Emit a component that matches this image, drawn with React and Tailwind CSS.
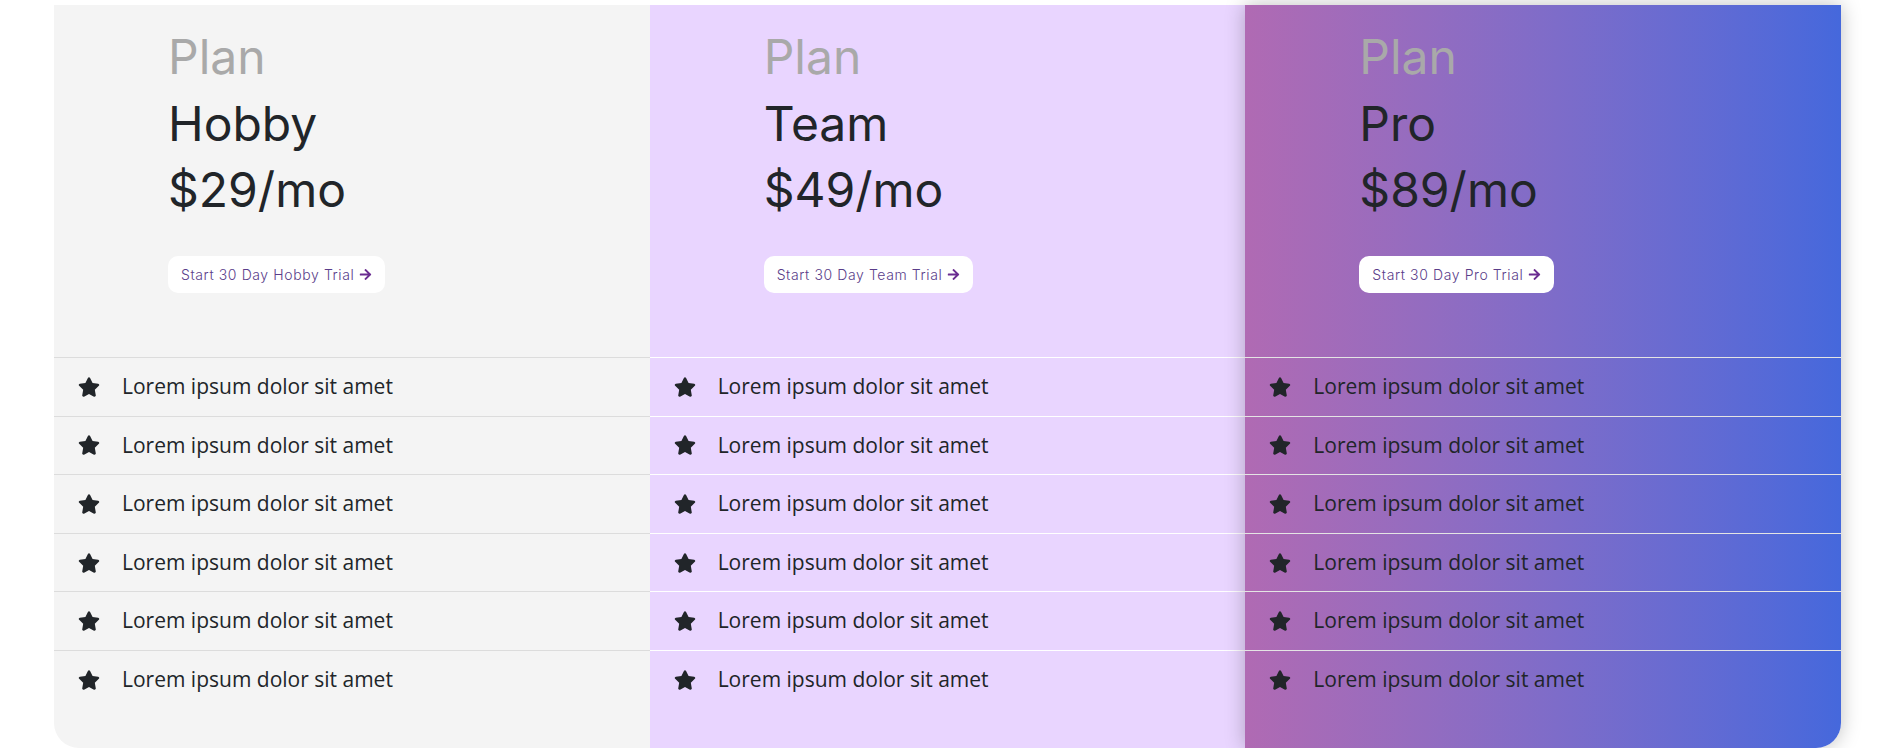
import React from 'react';
import { FaStar, FaArrowRight } from 'react-icons/fa';

const plans = [
  {
    name: 'Hobby',
    price: '$29/mo',
    bg: 'bg-[#f4f4f4] rounded-bl-[25px]',
    line: 'border-[#dcdcdc]',
  },
  {
    name: 'Team',
    price: '$49/mo',
    bg: 'bg-[#e9d5ff]',
    line: 'border-white',
  },
  {
    name: 'Pro',
    price: '$89/mo',
    bg: 'bg-linear-to-r from-[#b06ab3] to-[#4568dc] rounded-br-[25px] relative z-10 shadow-[0_0_20px_rgba(0,0,0,0.25)]',
    line: 'border-[#e4e4e4]',
  },
];

const features = Array(6).fill('Lorem ipsum dolor sit amet');

const headingFont = { fontFamily: 'Inter, "Noto Sans", sans-serif' };

const PlanColumn = ({ plan }) => {
  return (
    <div className={`flex flex-col ${plan.bg}`}>
      {/* Header */}
      <div className="h-[352px] pl-[114px] pt-[23px]" style={headingFont}>
        <h2 className="text-[48px] leading-[1.2] mb-[9px] font-normal text-[#a9a9a9]">Plan</h2>
        <h2 className="text-[48px] leading-[1.2] mb-[9px] font-normal text-[#212529]">{plan.name}</h2>
        <h2 className="text-[48px] leading-[1.2] mb-2 font-normal text-[#212529]">{plan.price}</h2>
        <button className="mt-[29px] inline-flex h-[37px] items-center gap-[5px] rounded-[10px] bg-white px-[13px] text-[14px] font-light tracking-[0.6px] text-[#5a3d8a]">
          Start 30 Day {plan.name} Trial
          <FaArrowRight className="text-[13px] text-[#6a2c91]" />
        </button>
      </div>

      {/* Features */}
      <ul className="font-['Open_Sans',sans-serif]">
        {features.map((f, i) => (
          <li
            key={i}
            className={`flex h-[58.6px] items-center border-t ${plan.line} pl-[24px] text-[21px] text-[#212529]`}
          >
            <FaStar className="mr-[22px] h-[20px] w-[22px] text-[#212529]" />
            <span>{f}</span>
          </li>
        ))}
      </ul>
    </div>
  );
};

const App = () => {
  return (
    <div className="min-h-screen bg-white pt-[5px]">
      <div className="ml-[54px] grid h-[743px] w-[1787px] grid-cols-3">
        {plans.map((plan) => (
          <PlanColumn key={plan.name} plan={plan} />
        ))}
      </div>
    </div>
  );
};

export default App;
